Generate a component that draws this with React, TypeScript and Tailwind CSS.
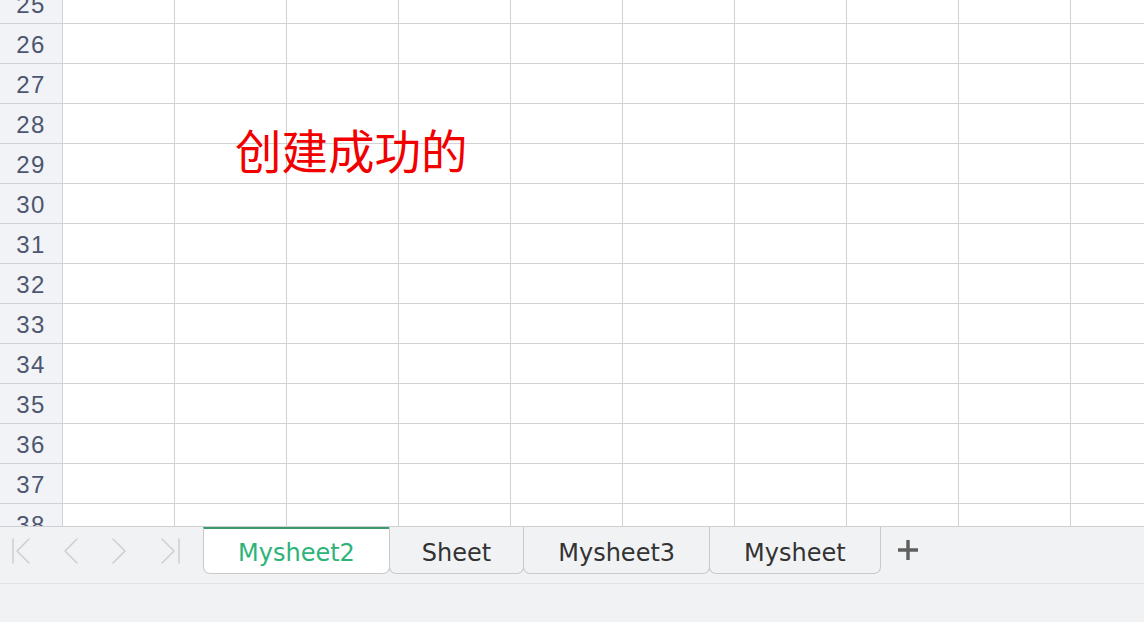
import React from 'react';

const rows = Array.from({ length: 14 }, (_, i) => 25 + i);
const cols = Array.from({ length: 10 }, (_, i) => i);

const tabs = [
  { name: 'Mysheet2', active: true, pad: 'px-[34px]' },
  { name: 'Sheet', active: false, pad: 'px-[32px]' },
  { name: 'Mysheet3', active: false, pad: 'px-[34px]' },
  { name: 'Mysheet', active: false, pad: 'px-[34px]' },
];

function NavIcon({ kind }: { kind: 'first' | 'prev' | 'next' | 'last' }) {
  return (
    <svg width="22" height="26" viewBox="0 0 22 26" fill="none" stroke="#cfd0d4" strokeWidth="1.6" strokeLinecap="round" strokeLinejoin="round">
      {kind === 'first' && (
        <>
          <path d="M3 1 V25" />
          <path d="M19 1 L7 13 L19 25" />
        </>
      )}
      {kind === 'prev' && <path d="M17 1 L5 13 L17 25" />}
      {kind === 'next' && <path d="M5 1 L17 13 L5 25" />}
      {kind === 'last' && (
        <>
          <path d="M4 1 L16 13 L4 25" />
          <path d="M21 1 V25" />
        </>
      )}
    </svg>
  );
}

export default function App() {
  return (
    <div className="w-[1144px] h-[622px] overflow-hidden bg-white" style={{ fontFamily: '"Liberation Sans", "Noto Sans CJK SC", sans-serif' }}>
      {/* grid */}
      <div className="relative h-[526px] overflow-hidden">
        <div className="-mt-[16px]">
          {rows.map((r) => (
            <div key={r} className="flex h-[40px]">
              <div className="w-[63px] shrink-0 flex items-center justify-center pt-[2px] bg-[#f2f3f6] border-r border-b border-[#d2d2d5] text-[24px] tracking-[1.5px] text-[#4d5670]">
                {r}
              </div>
              {cols.map((c) => (
                <div key={c} className="w-[112px] shrink-0 border-r border-b border-[#d2d2d5]" />
              ))}
            </div>
          ))}
        </div>
        <div
          className="absolute left-[235px] top-[126px] text-[46.5px] leading-none text-[#f20000] whitespace-nowrap"
          style={{ fontFamily: '"Noto Sans CJK SC", sans-serif' }}
        >
          创建成功的
        </div>
      </div>

      {/* sheet bar */}
      <div className="h-[96px] bg-[#f1f2f4] border-t border-[#cfcfd2]">
        <div className="flex items-start h-[57px] border-b border-[#e2e3e6]">
          <div className="w-[203px] shrink-0 flex items-center h-[47px] pl-[10px]">
            <NavIcon kind="first" />
            <div className="ml-[28px]"><NavIcon kind="prev" /></div>
            <div className="ml-[26px]"><NavIcon kind="next" /></div>
            <div className="ml-[28px]"><NavIcon kind="last" /></div>
          </div>
          <div className="flex items-start" style={{ fontFamily: '"DejaVu Sans", sans-serif' }}>
            {tabs.map((t, i) => (
              <div
                key={t.name}
                className={
                  'h-[47px] flex items-center text-[24px] border-x border-b border-[#c9c9cc] rounded-b-[7px] ' +
                  t.pad +
                  (i > 0 ? ' -ml-px' : '') +
                  (t.active
                    ? ' bg-white text-[#2db37a] border-t-2 border-t-[#3d9a6c] pt-[3px]'
                    : ' bg-[#f1f2f4] text-[#333333] pt-[5px]')
                }
              >
                {t.name}
              </div>
            ))}
            <div className="ml-[17px] mt-[13px]">
              <svg width="20" height="20" viewBox="0 0 20 20" fill="none" stroke="#5f5f5f" strokeWidth="3.4">
                <path d="M10 0 V20 M0 10 H20" />
              </svg>
            </div>
          </div>
        </div>
      </div>
    </div>
  );
}
